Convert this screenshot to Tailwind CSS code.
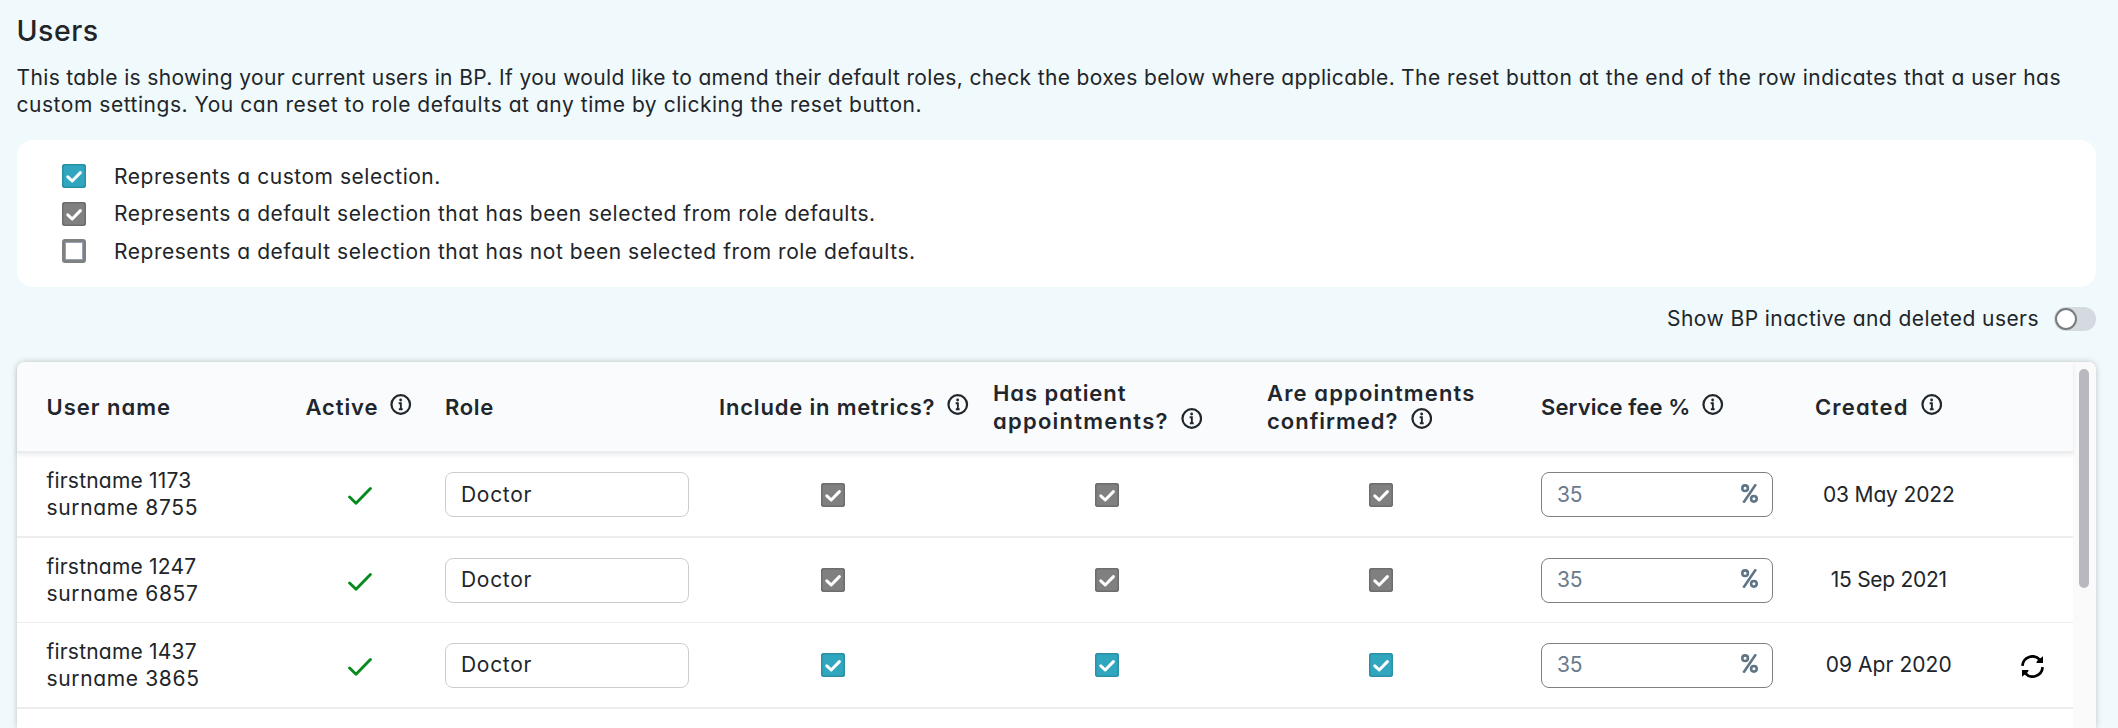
<!DOCTYPE html>
<html lang="en">
  <head>
    <meta charset="UTF-8" />
    <meta name="viewport" content="width=device-width, initial-scale=1.0" />
    <title>Users</title>
    <script src="https://cdn.jsdelivr.net/npm/@tailwindcss/browser@4"></script>
  </head>
  <body
    class="h-screen overflow-hidden bg-[#f0f9fb] pl-[17px] pr-[22px] pt-[14px] flex flex-col font-['Inter','Open_Sans',sans-serif] text-[21px] leading-[27.3px] text-[#212529] [font-feature-settings:'cv11']"
  >
    <h1 class="-ml-[0.5px] h-[33px] text-[28.5px] leading-[33px] font-medium tracking-[0.5px]">Users</h1>
    <p class="-ml-[0.5px] mt-[17px] h-[55px] whitespace-nowrap">
      <span class="tracking-[0.36px]">This table is showing your current users in BP. If you would like to amend their default roles, check the boxes below where applicable.</span>
      <span class="tracking-[0.5px]">The reset button at the end of the row indicates that a user has</span><br />
      <span class="tracking-[0.53px]">custom settings. You can reset to role defaults at any time by clicking the reset button.</span>
    </p>

    <!-- Legend -->
    <ul class="mt-[21px] h-[147px] shrink-0 rounded-2xl bg-white pl-[45px] pt-6 flex flex-col gap-[13.5px] tracking-[0.53px]">
      <li class="flex items-center gap-[28px] h-6">
        <span class="checkbox" data-kind="custom"></span><span class="pt-px">Represents a custom selection.</span>
      </li>
      <li class="flex items-center gap-[28px] h-6">
        <span class="checkbox" data-kind="default"></span><span>Represents a default selection that has been selected from role defaults.</span>
      </li>
      <li class="flex items-center gap-[28px] h-6">
        <span class="size-6 rounded-[3px] border-[3px] border-[#808080]"><span class="block size-full border border-[#94a3b8] bg-white"></span></span><span class="pt-px">Represents a default selection that has not been selected from role defaults.</span>
      </li>
    </ul>

    <!-- Inactive users toggle -->
    <div class="mt-5 h-6 shrink-0 flex items-center justify-end gap-[15px]">
      <span class="tracking-[0.44px]">Show BP inactive and deleted users</span>
      <span class="w-[42px] h-6 rounded-full bg-[#d5dae1] flex items-center pl-[1px]">
        <span class="size-[22px] rounded-full bg-white border-2 border-[#777b80]"></span>
      </span>
    </div>

    <!-- Users table -->
    <div class="mt-[31px] flex-1 min-h-0 rounded-t-lg bg-white shadow-[0_0_6px_rgba(0,0,0,0.22)] flex">
      <div class="w-[2055.5px]">
        <div
          class="relative h-[91px] rounded-tl-lg bg-[#fafbfd] border-b-2 border-[#ebecee] shadow-[0_2px_4px_rgba(0,0,0,0.08)] pl-[29.5px] grid grid-cols-[259px_139.5px_repeat(5,274px)_1fr] items-center whitespace-nowrap text-[22px] leading-7 font-semibold text-[#1f262c]"
        >
          <div class="tracking-[1px]">User name</div>
          <div class="tracking-[0.9px]">Active<span class="info"></span></div>
          <div class="tracking-[0.7px]">Role</div>
          <div class="tracking-[0.82px]">Include in metrics?<span class="info"></span></div>
          <div><span class="tracking-[0.95px]">Has patient</span><br /><span class="tracking-[1.25px]">appointments?</span><span class="info"></span></div>
          <div><span class="tracking-[1.13px]">Are appointments</span><br /><span class="tracking-[1px]">confirmed?</span><span class="info"></span></div>
          <div class="tracking-[0.1px]">Service fee %<span class="info"></span></div>
          <div class="tracking-[1.15px]">Created<span class="info"></span></div>
        </div>
        <div class="user-rows"></div>
      </div>
      <div class="flex-1 rounded-tr-lg bg-[#fafafa] pl-[6.5px] pt-[7px]">
        <div class="w-[10px] h-[219px] rounded-full bg-[#b9b8be]"></div>
      </div>
    </div>

    <script>
      const tick = `<svg class="size-full" viewBox="0 0 24 24" fill="none" stroke="#fff" stroke-width="3" stroke-linecap="round" stroke-linejoin="round"><path d="M5.8 12.8 10.2 17 18.4 8.6" /></svg>`;

      const checkbox = (kind) =>
        kind === "custom"
          ? `<span class="block size-6 rounded-[3px] bg-[#31a6bf] shadow-[inset_0_0_0_1.5px_#2b8fa5]">${tick}</span>`
          : `<span class="block size-6 rounded-[3px] bg-[#808080] shadow-[inset_0_0_0_1.5px_#6d6d6d]">${tick}</span>`;

      const infoIcon = `<svg class="inline-block align-baseline ml-[12px] w-[21.5px] h-[21px]" viewBox="0 0 21 21" fill="none" stroke="currentColor">
          <circle cx="10.5" cy="10.5" r="9.3" stroke-width="2.2" />
          <circle cx="10.4" cy="6" r="1.4" fill="currentColor" stroke="none" />
          <path d="M8.4 9.2h2.2v6.4M8.6 15.2h3.8" stroke-width="1.9" />
        </svg>`;

      const resetIcon = `
        <svg class="mt-[3px] size-[23px]" viewBox="0 0 23 23" fill="none" stroke="#000" stroke-width="2.7">
          <path d="M1.4 10.8A10.1 10.1 0 0 1 19 4.8" />
          <path d="M21.6 12.2A10.1 10.1 0 0 1 4 18.2" />
          <path d="M22 1.2v6.8h-6.6l.6-2zM1 21.8V15h6.6l-.6 2z" fill="#000" stroke="none" />
        </svg>`;

      const users = [
        { first: "firstname 1173", last: "surname 8755", kind: "default", created: "03 May 2022", border: "h-[85px] border-b-2", spacing: "tracking-[-0.15px]" },
        { first: "firstname 1247", last: "surname 6857", kind: "default", created: "15 Sep 2021", border: "h-[85px] border-b", spacing: "tracking-[-0.3px]" },
        { first: "firstname 1437", last: "surname 3865", kind: "custom", created: "09 Apr 2020", border: "h-[86px] border-b-2", spacing: "tracking-[0.05px]", reset: true },
      ];

      document.querySelector(".user-rows").innerHTML = users
        .map(
          (user) => `
          <div class="${user.border} border-[#ededee] pl-[29.5px] grid grid-cols-[259px_139.5px_repeat(5,274px)_1fr] items-center">
            <div>
              <div class="tracking-[0.2px]">${user.first}</div>
              <div class="-mt-[0.3px] tracking-[0.65px]">${user.last}</div>
            </div>
            <div class="pl-[42.5px] pt-[3px]">
              <svg class="w-6 h-[18px]" viewBox="0 0 24 18" fill="none" stroke="#058a1c" stroke-width="2.9" stroke-linecap="round" stroke-linejoin="round"><path d="M1.6 10 8 16.2 22.4 1.6" /></svg>
            </div>
            <div class="w-[244px] h-[45px] rounded-lg border border-[#cdcdcd] pl-[15px] flex items-center tracking-[0.7px]">Doctor</div>
            <div class="pl-[102px]">${checkbox(user.kind)}</div>
            <div class="pl-[102px]">${checkbox(user.kind)}</div>
            <div class="pl-[102px]">${checkbox(user.kind)}</div>
            <div class="w-[232px] h-[45px] rounded-lg border border-[#808080] pl-[15px] pr-[14px] flex items-center justify-between tracking-[-0.2px] text-[#6b7a8d]">
              35
              <svg class="-mt-[3px] w-[17px] h-[19px]" viewBox="0 0 17 19" fill="none" stroke="#5f7485" stroke-width="2.6">
                <circle cx="4.1" cy="4.2" r="2.8" />
                <circle cx="12.9" cy="14.8" r="2.8" />
                <path d="M14.9.3 2.4 18.7" />
              </svg>
            </div>
            <div class="flex items-center">
              <span class="w-[147.5px] text-center whitespace-nowrap ${user.spacing}">${user.created}</span>
              <span class="ml-[58.5px]">${user.reset ? resetIcon : ""}</span>
            </div>
          </div>`
        )
        .join("");

      document.querySelectorAll(".checkbox").forEach((el) => {
        el.innerHTML = checkbox(el.dataset.kind);
      });
      document.querySelectorAll(".info").forEach((el) => {
        el.innerHTML = infoIcon;
      });
    </script>
  </body>
</html>
